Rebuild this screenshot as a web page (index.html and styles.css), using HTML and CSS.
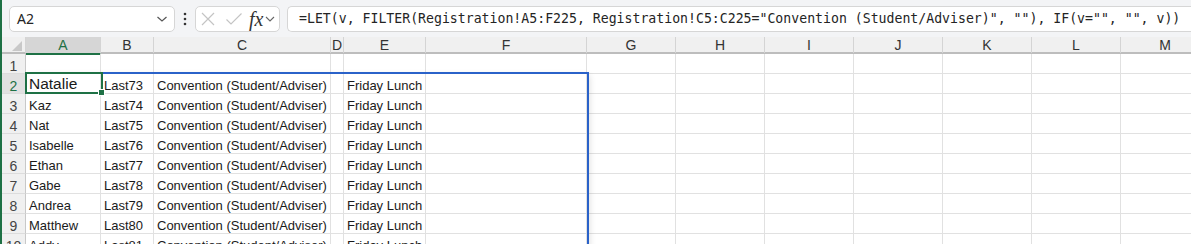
FILE: index.html
```html
<!DOCTYPE html>
<html lang="en">
<head>
    <meta charset="UTF-8">
    <title>Registration - Excel</title>
    <link rel="stylesheet" href="styles.css">
</head>
<body>
<div class="app">
    <div class="toolbar">
        <div class="namebox">
            <span>A2</span>
            <svg class="chev" width="12" height="8" viewBox="0 0 12 8"><path d="M1.5 2 L6 6 L10.5 2" fill="none" stroke="#555" stroke-width="1.2"/></svg>
        </div>
        <svg class="more" width="4" height="16" viewBox="0 0 4 16"><circle cx="2" cy="3" r="1.3" fill="#333"/><circle cx="2" cy="8" r="1.3" fill="#333"/><circle cx="2" cy="13" r="1.3" fill="#333"/></svg>
        <div class="fxbox">
            <svg class="cancel" width="16" height="16" viewBox="0 0 16 16"><path d="M2 2 L14 14 M14 2 L2 14" stroke="#c4c4c4" stroke-width="1.2"/></svg>
            <svg class="enter" width="18" height="16" viewBox="0 0 18 16"><path d="M1.5 8.5 L6 13 L16.5 2.5" fill="none" stroke="#c4c4c4" stroke-width="1.2"/></svg>
            <span class="fx">fx</span>
            <svg class="chev-s" width="10" height="8" viewBox="0 0 10 8"><path d="M1 2 L5 6 L9 2" fill="none" stroke="#666" stroke-width="1.1"/></svg>
        </div>
        <div class="formula">=LET(v, FILTER(Registration!A5:F225, Registration!C5:C225="Convention (Student/Adviser)", ""), IF(v="", "", v))</div>
    </div>

    <div class="sheet">
        <div class="row head">
            <div class="corner"><svg width="10" height="10" viewBox="0 0 10 10"><path d="M10 0 L10 10 L0 10 Z" fill="#c8c8c8"/></svg></div>
            <div class="col active">A</div><div class="col">B</div><div class="col">C</div><div class="col">D</div><div class="col">E</div><div class="col">F</div><div class="col">G</div><div class="col">H</div><div class="col">I</div><div class="col">J</div><div class="col">K</div><div class="col">L</div><div class="col">M</div>
        </div>
        <div class="row">
            <div class="num">1</div>
            <div class="c"></div><div class="c"></div><div class="c"></div><div class="c"></div><div class="c"></div><div class="c"></div><div class="c"></div><div class="c"></div><div class="c"></div><div class="c"></div><div class="c"></div><div class="c"></div><div class="c"></div>
        </div>
        <div class="row">
            <div class="num active">2</div>
            <div class="c big">Natalie</div><div class="c">Last73</div><div class="c">Convention (Student/Adviser)</div><div class="c"></div><div class="c">Friday Lunch</div><div class="c"></div><div class="c"></div><div class="c"></div><div class="c"></div><div class="c"></div><div class="c"></div><div class="c"></div><div class="c"></div>
        </div>
        <div class="row">
            <div class="num">3</div>
            <div class="c">Kaz</div><div class="c">Last74</div><div class="c">Convention (Student/Adviser)</div><div class="c"></div><div class="c">Friday Lunch</div><div class="c"></div><div class="c"></div><div class="c"></div><div class="c"></div><div class="c"></div><div class="c"></div><div class="c"></div><div class="c"></div>
        </div>
        <div class="row">
            <div class="num">4</div>
            <div class="c">Nat</div><div class="c">Last75</div><div class="c">Convention (Student/Adviser)</div><div class="c"></div><div class="c">Friday Lunch</div><div class="c"></div><div class="c"></div><div class="c"></div><div class="c"></div><div class="c"></div><div class="c"></div><div class="c"></div><div class="c"></div>
        </div>
        <div class="row">
            <div class="num">5</div>
            <div class="c">Isabelle</div><div class="c">Last76</div><div class="c">Convention (Student/Adviser)</div><div class="c"></div><div class="c">Friday Lunch</div><div class="c"></div><div class="c"></div><div class="c"></div><div class="c"></div><div class="c"></div><div class="c"></div><div class="c"></div><div class="c"></div>
        </div>
        <div class="row">
            <div class="num">6</div>
            <div class="c">Ethan</div><div class="c">Last77</div><div class="c">Convention (Student/Adviser)</div><div class="c"></div><div class="c">Friday Lunch</div><div class="c"></div><div class="c"></div><div class="c"></div><div class="c"></div><div class="c"></div><div class="c"></div><div class="c"></div><div class="c"></div>
        </div>
        <div class="row">
            <div class="num">7</div>
            <div class="c">Gabe</div><div class="c">Last78</div><div class="c">Convention (Student/Adviser)</div><div class="c"></div><div class="c">Friday Lunch</div><div class="c"></div><div class="c"></div><div class="c"></div><div class="c"></div><div class="c"></div><div class="c"></div><div class="c"></div><div class="c"></div>
        </div>
        <div class="row">
            <div class="num">8</div>
            <div class="c">Andrea</div><div class="c">Last79</div><div class="c">Convention (Student/Adviser)</div><div class="c"></div><div class="c">Friday Lunch</div><div class="c"></div><div class="c"></div><div class="c"></div><div class="c"></div><div class="c"></div><div class="c"></div><div class="c"></div><div class="c"></div>
        </div>
        <div class="row">
            <div class="num">9</div>
            <div class="c">Matthew</div><div class="c">Last80</div><div class="c">Convention (Student/Adviser)</div><div class="c"></div><div class="c">Friday Lunch</div><div class="c"></div><div class="c"></div><div class="c"></div><div class="c"></div><div class="c"></div><div class="c"></div><div class="c"></div><div class="c"></div>
        </div>
        <div class="row">
            <div class="num">10</div>
            <div class="c">Addy</div><div class="c">Last81</div><div class="c">Convention (Student/Adviser)</div><div class="c"></div><div class="c">Friday Lunch</div><div class="c"></div><div class="c"></div><div class="c"></div><div class="c"></div><div class="c"></div><div class="c"></div><div class="c"></div><div class="c"></div>
        </div>

        <!-- spill range and active cell drawn over the grid -->
        <div class="spill"></div>
        <div class="selection"><span class="handle"></span></div>
    </div>
</div>
</body>
</html>
```

FILE: styles.css
```css
html, body {
    margin: 0;
    height: 100%;
    overflow: hidden;
    background: #ffffff;
}

.app {
    border-left: 2px solid #1e7145;
    height: 100%;
    font-family: 'Liberation Sans', Arial, sans-serif;
}

.toolbar {
    height: 37px;
    box-sizing: border-box;
    background: #f3f4f6;
    display: flex;
    align-items: center;
    padding: 4px 0 4px 7px;
}

.namebox {
    width: 166px;
    height: 26px;
    box-sizing: border-box;
    background: #fff;
    border: 1px solid #d6d6d6;
    border-radius: 5px;
    display: flex;
    align-items: center;
    justify-content: space-between;
    padding: 0 6px 0 7px;
    font-family: 'Noto Sans', 'Liberation Sans', sans-serif;
    font-size: 14px;
    color: #242424;
}

.more {
    margin: 0 8px 0 8px;
}

.fxbox {
    width: 85px;
    height: 26px;
    box-sizing: border-box;
    background: #fff;
    border: 1px solid #d6d6d6;
    border-radius: 5px;
    display: flex;
    align-items: center;
    padding: 0 0 0 4px;
}

.enter {
    margin-left: 9px;
}

.fx {
    font-family: 'Liberation Serif', serif;
    font-style: italic;
    font-size: 20px;
    color: #333;
    margin-left: 6px;
    line-height: 1;
}

.chev-s {
    margin-left: 2px;
}

.formula {
    flex: 1;
    margin-left: 7px;
    height: 26px;
    box-sizing: border-box;
    background: #fff;
    border: 1px solid #d6d6d6;
    border-right: none;
    border-radius: 5px 0 0 5px;
    padding-left: 11px;
    font-family: 'DejaVu Sans Mono', 'Liberation Mono', monospace;
    font-size: 13.2px;
    line-height: 24px;
    color: #242424;
    white-space: nowrap;
    overflow: hidden;
}

.sheet {
    position: relative;
}

.row {
    display: grid;
    grid-template-columns: 24px 75px 53px 177px 13px 82px 161px 89px 89px 89px 89px 89px 89px 89px;
    height: 20px;
}

.row.head {
    height: 17px;
    background: #f0f0f0;
    border-bottom: 2px solid #bdbdbd;
    box-sizing: border-box;
}

.corner {
    display: flex;
    align-items: flex-end;
    justify-content: flex-end;
    padding: 0 3px 2px 0;
    border-right: 1px solid #d4d4d4;
}

.col {
    text-align: center;
    font-size: 14px;
    line-height: 15px;
    padding-top: 1px;
    color: #333;
    border-right: 1px solid #d4d4d4;
}

.col.active {
    background: #d6d6d6;
    color: #1e7145;
    border-bottom: 2px solid #1e7145;
    margin-bottom: -2px;
}

.num {
    background: #f0f0f0;
    text-align: center;
    font-size: 14px;
    line-height: 16px;
    padding-top: 4px;
    overflow: hidden;
    color: #444;
    border-right: 1px solid #c8c8c8;
    border-bottom: 1px solid #dcdcdc;
}

.num.active {
    background: #e1e1e1;
    color: #1e7145;
}

.c {
    border-right: 1px solid #e1e1e1;
    border-bottom: 1px solid #e1e1e1;
    padding: 4px 0 0 3px;
    font-size: 13px;
    line-height: 16px;
    color: #1a1a1a;
    white-space: nowrap;
    overflow: hidden;
}

.c.big {
    font-size: 15.5px;
    line-height: 16px;
    padding-top: 2px;
}

.spill {
    position: absolute;
    left: 24px;
    top: 35px;
    width: 561px;
    height: 200px;
    border-top: 2px solid #2a62c9;
    border-right: 2px solid #2a62c9;
    box-shadow: 4px 0 6px -3px rgba(0, 0, 0, 0.12);
}

.selection {
    position: absolute;
    left: 23px;
    top: 35px;
    width: 78px;
    height: 22px;
    box-sizing: border-box;
    border: 2px solid #1e7145;
}

.handle {
    position: absolute;
    right: -4px;
    bottom: -4px;
    width: 5px;
    height: 5px;
    background: #1e7145;
    border: 1px solid #fff;
}
```
